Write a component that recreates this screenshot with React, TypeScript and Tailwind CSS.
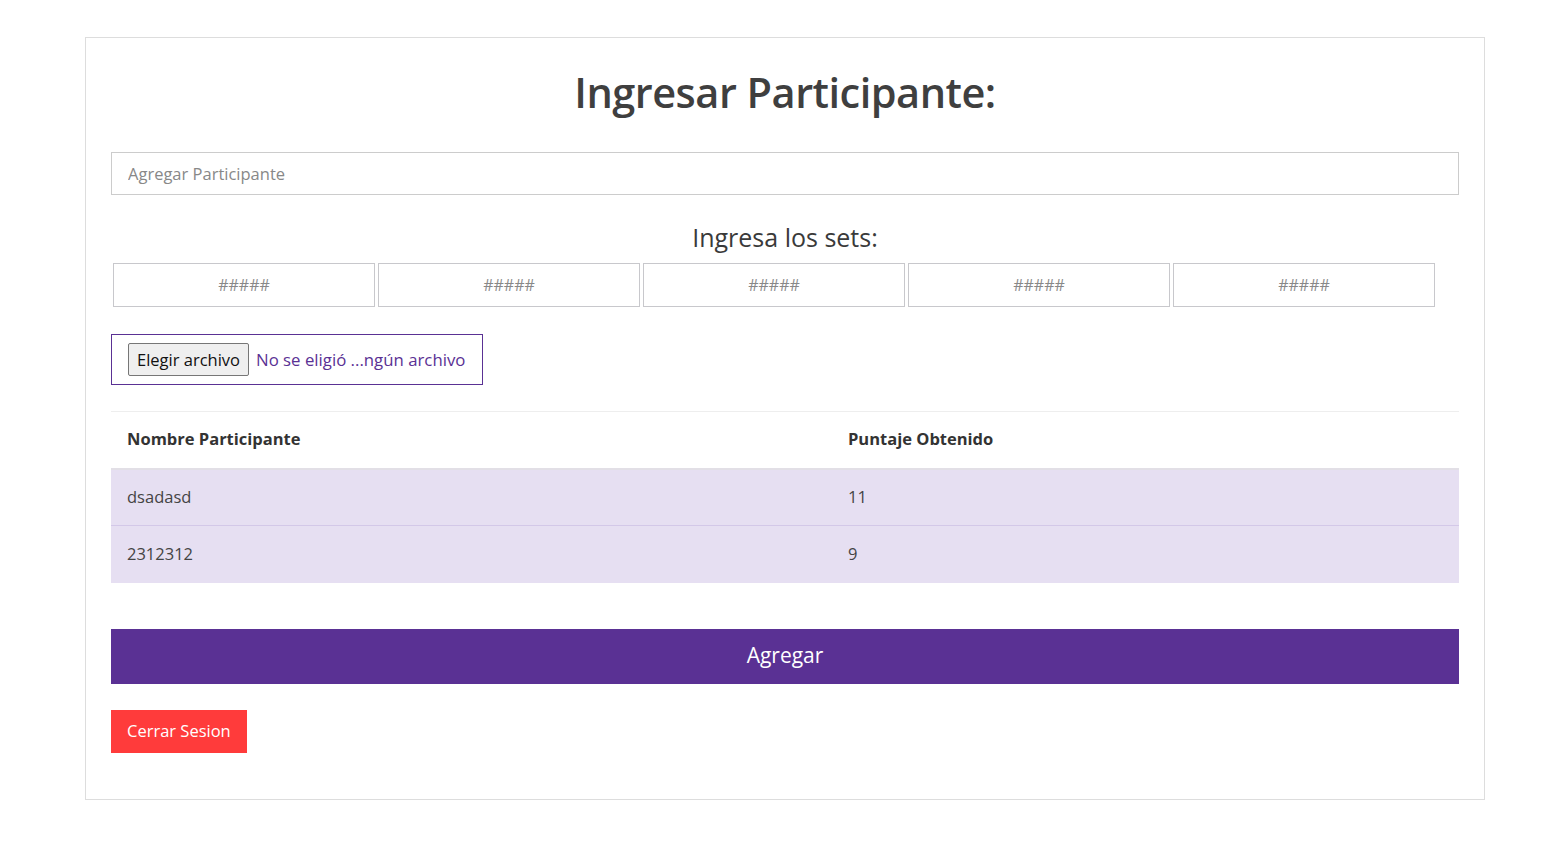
import React from 'react';

const rows = [
  { nombre: 'dsadasd', puntaje: '11' },
  { nombre: '2312312', puntaje: '9' },
];

const App = () => {
  return (
    <div className="min-h-screen bg-white pt-[37px] pb-12 font-['Open_Sans',sans-serif] text-[#444]">
      <div className="mx-[85px] w-[1400px] border border-[#dddddd] px-[25px] pt-[25px] pb-[46px]">
        <h1 className="text-center text-[41.5px] font-semibold leading-[58px] tracking-[-0.5px] text-[#3f3f3f]">
          Ingresar Participante:
        </h1>

        {/* Nombre del participante */}
        <input
          type="text"
          placeholder="Agregar Participante"
          className="mt-[31px] block h-[43px] w-full border border-[#cccccc] px-4 text-[16.5px] text-[#555] placeholder:text-[#888] outline-none"
        />

        <h3 className="mt-[25px] text-center text-[25px] font-medium leading-[34px] text-[#3a3a3a]">Ingresa los sets:</h3>

        {/* Sets */}
        <div className="mt-[9px] flex gap-[3px] pl-[2px]">
          {[0, 1, 2, 3, 4].map((i) => (
            <input
              key={i}
              type="text"
              placeholder="#####"
              className="h-[44px] w-[262px] border border-[#c8c8cc] text-center text-[16px] placeholder:text-[#888] outline-none"
            />
          ))}
        </div>

        {/* Archivo */}
        <div className="mt-[27px] inline-flex h-[51px] items-center gap-[7px] border border-[#5a3194] pl-4 pr-[17px]">
          <span className="rounded-[2px] border border-[#767676] bg-[#efefef] px-[8px] py-[3px] text-[16.5px] leading-[25px] text-[#111]">
            Elegir archivo
          </span>
          <span className="text-[16.8px] text-[#5a3194]">No se eligió ...ngún archivo</span>
        </div>

        {/* Tabla */}
        <table className="mt-[26px] w-full border-t border-[#eeeeee] text-[16.5px]">
          <thead>
            <tr className="border-b-2 border-[#e2dfe6]">
              <th className="h-[57px] w-[721px] px-4 text-left font-bold text-[#333]">Nombre Participante</th>
              <th className="h-[57px] px-4 text-left font-bold text-[#333]">Puntaje Obtenido</th>
            </tr>
          </thead>
          <tbody>
            {rows.map((r, idx) => (
              <tr key={idx} className={`bg-[#e6dff2] ${idx > 0 ? 'border-t border-[#d3c8e8]' : ''}`}>
                <td className="h-[57px] px-4 text-[#444]">{r.nombre}</td>
                <td className="h-[57px] px-4 text-[#444]">{r.puntaje}</td>
              </tr>
            ))}
          </tbody>
        </table>

        <button className="mt-[46px] block h-[55px] w-full bg-[#5a3194] text-[21px] text-white">Agregar</button>

        <button className="mt-[26px] block h-[43px] bg-[#ff3b3b] px-4 text-[16.5px] text-white">Cerrar Sesion</button>
      </div>
    </div>
  );
};

export default App;
